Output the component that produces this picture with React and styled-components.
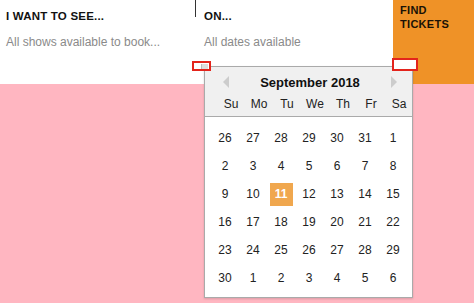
import React from "react"
import styled, { createGlobalStyle } from "styled-components"

const GlobalStyle = createGlobalStyle`
  html, body {
    margin: 0;
    padding: 0;
    background: #ffb6c1;
    font-family: "Helvetica Neue", "Liberation Sans", Arial, sans-serif;
  }
`

const Page = styled.div`
  position: relative;
  width: 474px;
  height: 303px;
  overflow: hidden;
  background: #ffb6c1;
`

const SearchBar = styled.div`
  display: grid;
  grid-template-columns: 195px 198px 1fr;
  height: 84px;
  background: #fff;
`

const Field = styled.div`
  padding: 10px 0 0 ${(p) => p.$pad || 6}px;
  position: relative;
`

const Divider = styled.div`
  position: absolute;
  left: 0;
  top: 0;
  width: 1px;
  height: 17px;
  background: #333;
`

const FieldLabel = styled.div`
  font-size: 11.5px;
  font-weight: bold;
  color: #111;
  letter-spacing: 0.2px;
  line-height: 13px;
`

const FieldValue = styled.div`
  margin-top: 12px;
  font-size: 12px;
  color: #8a8a8a;
`

const FindButton = styled.div`
  background: #ef9227;
  padding: 3px 0 0 7px;
  font-size: 11px;
  font-weight: bold;
  color: #1a1206;
  line-height: 14px;
  letter-spacing: 0.3px;
`

const Marker = styled.div`
  position: absolute;
  left: ${(p) => p.$x}px;
  top: ${(p) => p.$y}px;
  width: ${(p) => p.$w}px;
  height: ${(p) => p.$h}px;
  border: 2px solid #e3241c;
  box-sizing: border-box;
  background: #fff;
  z-index: 3;
`

const MarkerNub = styled.div`
  position: absolute;
  right: 1px;
  top: 1px;
  width: 6px;
  height: 5px;
  background: #ddd;
  border-left: 1px solid #bbb;
`

const Calendar = styled.div`
  position: absolute;
  left: 204px;
  top: 66px;
  width: 209px;
  height: 232px;
  box-sizing: border-box;
  background: #fff;
  border: 1px solid #aaa;
  box-shadow: 0 1px 2px rgba(0, 0, 0, 0.15);
  font-family: "Helvetica Neue", "Liberation Sans", Arial, sans-serif;
`

const CalHeader = styled.div`
  background: #f0f0f0;
  border-bottom: 1px solid #aaa;
  height: 50px;
  box-sizing: border-box;
  padding: 0 6px;
`

const MonthRow = styled.div`
  display: flex;
  align-items: center;
  justify-content: space-between;
  height: 30px;
  padding: 0 9px 0 12px;
`

const MonthTitle = styled.div`
  font-size: 13px;
  font-weight: bold;
  color: #111;
`

const Arrow = styled.div`
  width: 0;
  height: 0;
  border-top: 6px solid transparent;
  border-bottom: 6px solid transparent;
  ${(p) =>
    p.$dir === "left"
      ? "border-right: 6px solid #ccc;"
      : "border-left: 6px solid #ccc;"}
`

const Grid = styled.div`
  display: grid;
  grid-template-columns: repeat(7, 28px);
  padding: 0 6px;
`

const DayName = styled.div`
  height: 14px;
  text-align: center;
  font-size: 12px;
  color: #222;
`

const Days = styled(Grid)`
  padding-top: 7px;
  grid-auto-rows: 28px;
`

const Day = styled.div`
  display: flex;
  align-items: center;
  justify-content: center;
  font-size: 12px;
  color: #222;

  span {
    display: flex;
    align-items: center;
    justify-content: center;
    width: 23px;
    height: 23px;
    background: ${(p) => (p.$selected ? "#f0a74e" : "transparent")};
    color: ${(p) => (p.$selected ? "#fff" : "#222")};
    font-weight: ${(p) => (p.$selected ? "bold" : "normal")};
  }
`

const dayNames = ["Su", "Mo", "Tu", "We", "Th", "Fr", "Sa"]
const days = [
  26, 27, 28, 29, 30, 31, 1,
  2, 3, 4, 5, 6, 7, 8,
  9, 10, 11, 12, 13, 14, 15,
  16, 17, 18, 19, 20, 21, 22,
  23, 24, 25, 26, 27, 28, 29,
  30, 1, 2, 3, 4, 5, 6,
]

const App = () => (
  <Page>
    <GlobalStyle />
    <SearchBar>
      <Field>
        <FieldLabel>I WANT TO SEE...</FieldLabel>
        <FieldValue>All shows available to book...</FieldValue>
      </Field>
      <Field $pad={9}>
        <Divider />
        <FieldLabel>ON...</FieldLabel>
        <FieldValue>All dates available</FieldValue>
      </Field>
      <FindButton>
        FIND
        <br />
        TICKETS
      </FindButton>
    </SearchBar>

    <Calendar>
      <CalHeader>
        <MonthRow>
          <Arrow $dir="left" />
          <MonthTitle>September 2018</MonthTitle>
          <Arrow $dir="right" />
        </MonthRow>
        <Grid>
          {dayNames.map((d) => (
            <DayName key={d}>{d}</DayName>
          ))}
        </Grid>
      </CalHeader>
      <Days>
        {days.map((d, i) => (
          <Day key={i} $selected={i === 16}>
            <span>{d}</span>
          </Day>
        ))}
      </Days>
    </Calendar>

    <Marker $x={192} $y={61} $w={19} $h={10}>
      <MarkerNub />
    </Marker>
    <Marker $x={392} $y={58} $w={26} $h={13} />
  </Page>
)

export default App
